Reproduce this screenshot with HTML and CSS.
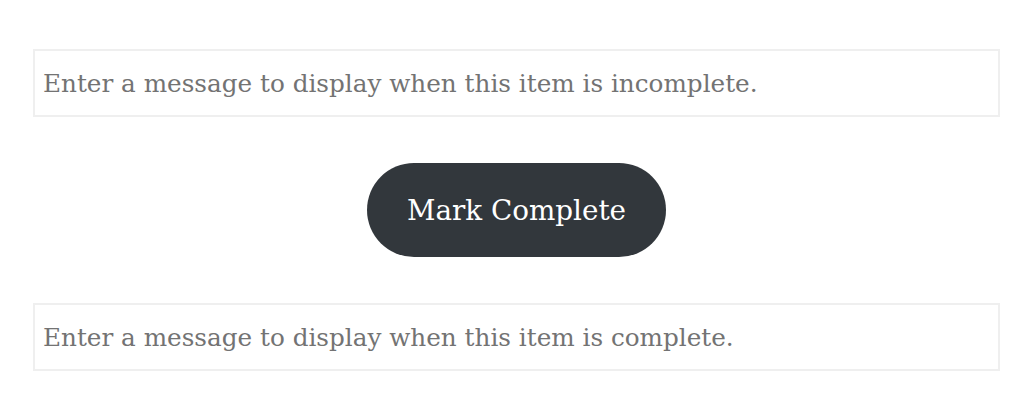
FILE: index.html
```html
<!DOCTYPE html>
<html>
<head>
<meta charset="utf-8">
<link rel="stylesheet" href="styles.css">
</head>
<body>
<div class="wrap">
  <div class="msg"><span class="placeholder">Enter a message to display when this item is incomplete.</span></div>
  <div class="action"><button class="btn">Mark Complete</button></div>
  <div class="msg"><span class="placeholder">Enter a message to display when this item is complete.</span></div>
</div>
</body>
</html>
```
FILE: styles.css
```css
html, body {
  margin: 0;
  padding: 0;
  background: #ffffff;
}
.wrap {
  padding: 49px 24px 0 33px;
  display: flex;
  flex-direction: column;
}
.msg {
  box-sizing: border-box;
  height: 68px;
  border: 2px solid #efefef;
  padding: 0 8px;
  display: flex;
  align-items: center;
  font-family: "DejaVu Serif", serif;
  font-size: 24.7px;
  color: #737373;
}
.action {
  display: flex;
  justify-content: center;
  padding: 46px 0 46px;
}
.btn {
  height: 94px;
  padding: 0 40px;
  border: none;
  border-radius: 47px;
  background: #32373c;
  color: #ffffff;
  font-family: "DejaVu Serif", serif;
  font-size: 27.8px;
}
```
